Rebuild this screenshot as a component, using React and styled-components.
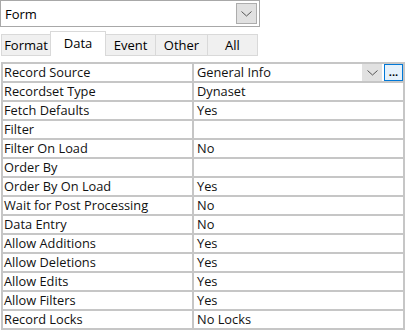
import React from "react";
import styled, { createGlobalStyle } from "styled-components";

const GlobalStyle = createGlobalStyle`
  body {
    margin: 0;
    background: #ffffff;
    font-family: "Open Sans", "Noto Sans", sans-serif;
  }
`;

const Sheet = styled.div`
  width: 408px;
  height: 332px;
  overflow: hidden;
  background: #ffffff;
`;

const Combo = styled.div`
  box-sizing: border-box;
  width: 260px;
  height: 27px;
  border: 1px solid #a8a8a8;
  display: flex;
  align-items: center;
  justify-content: space-between;
  padding: 0 2px 0 4px;
`;

const ComboText = styled.span`
  font-size: 13px;
  color: #000;
`;

const DropButton = styled.div`
  box-sizing: border-box;
  width: ${(p) => p.w}px;
  height: ${(p) => p.h}px;
  background: #e1e1e1;
  border: 1px solid ${(p) => (p.plain ? "#e1e1e1" : "#adadad")};
  display: flex;
  align-items: center;
  justify-content: center;
`;

const TabStrip = styled.div`
  display: flex;
  align-items: flex-end;
  height: 25px;
  margin-top: 4px;
  padding-left: 1px;
`;

const Tab = styled.div`
  box-sizing: border-box;
  width: ${(p) => p.w}px;
  height: ${(p) => (p.active ? 25 : 22)}px;
  background: ${(p) => (p.active ? "#ffffff" : "#f0f0f0")};
  border: 1px solid #d9d9d9;
  border-bottom: ${(p) => (p.active ? "none" : "1px solid #d9d9d9")};
  margin-left: ${(p) => (p.first ? 0 : -1)}px;
  display: flex;
  align-items: ${(p) => (p.active ? "flex-start" : "center")};
  justify-content: center;
  padding-top: ${(p) => (p.active ? 2 : 0)}px;
  font-size: 13px;
  color: #000;
`;

const Grid = styled.div`
  box-sizing: border-box;
  margin: 6px 0 0 1px;
  width: 404px;
  display: grid;
  grid-template-columns: 189px 1fr;
  grid-auto-rows: 17px;
  gap: 2px;
  padding: 2px;
  background: #c6c6c6;
`;

const Cell = styled.div`
  background: #ffffff;
  font-size: 12.8px;
  line-height: 17px;
  color: #111;
  padding-left: ${(p) => (p.value ? 3 : 1)}px;
  white-space: nowrap;
  overflow: hidden;
  display: flex;
  align-items: center;
`;

const ValueText = styled.span`
  flex: 1;
`;

const DotsButton = styled.div`
  box-sizing: border-box;
  width: 19px;
  height: 17px;
  margin-left: 2px;
  border: 1px solid #0078d7;
  background: #e5f1fb;
  display: flex;
  align-items: center;
  justify-content: center;
  font-size: 11px;
  font-weight: 700;
  line-height: 1;
  padding-bottom: 3px;
  color: #000;
`;

const Chevron = () => (
  <svg width="11" height="6" viewBox="0 0 11 6">
    <polyline points="0.5,0.5 5.5,5 10.5,0.5" fill="none" stroke="#555" strokeWidth="1" />
  </svg>
);

const rows = [
  ["Record Source", "General Info"],
  ["Recordset Type", "Dynaset"],
  ["Fetch Defaults", "Yes"],
  ["Filter", ""],
  ["Filter On Load", "No"],
  ["Order By", ""],
  ["Order By On Load", "Yes"],
  ["Wait for Post Processing", "No"],
  ["Data Entry", "No"],
  ["Allow Additions", "Yes"],
  ["Allow Deletions", "Yes"],
  ["Allow Edits", "Yes"],
  ["Allow Filters", "Yes"],
  ["Record Locks", "No Locks"],
];

const tabs = [
  { label: "Format", w: 50 },
  { label: "Data", w: 56, active: true },
  { label: "Event", w: 51 },
  { label: "Other", w: 53 },
  { label: "All", w: 51 },
];

const App = () => {
  return (
    <Sheet>
      <GlobalStyle />
      <Combo>
        <ComboText>Form</ComboText>
        <DropButton w={21} h={21}>
          <Chevron />
        </DropButton>
      </Combo>
      <TabStrip>
        {tabs.map((t, i) => (
          <Tab key={t.label} w={t.w} active={t.active} first={i === 0}>
            {t.label}
          </Tab>
        ))}
      </TabStrip>
      <Grid>
        {rows.map(([label, value], i) => (
          <React.Fragment key={label}>
            <Cell>{label}</Cell>
            <Cell value>
              <ValueText>{value}</ValueText>
              {i === 0 && (
                <>
                  <DropButton w={20} h={17} plain>
                    <Chevron />
                  </DropButton>
                  <DotsButton>...</DotsButton>
                </>
              )}
            </Cell>
          </React.Fragment>
        ))}
      </Grid>
    </Sheet>
  );
};

export default App;
